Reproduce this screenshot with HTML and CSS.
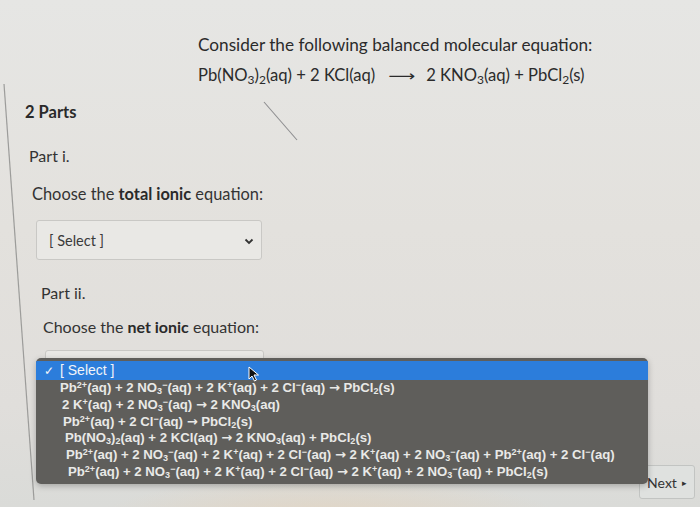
FILE: index.html
```html
<!DOCTYPE html>
<html>
<head>
<meta charset="utf-8">
<link rel="stylesheet" href="styles.css">
</head>
<body>
<div class="page">
  <svg class="marks" width="700" height="507" viewBox="0 0 700 507">
    <line x1="4" y1="84" x2="34" y2="500" stroke="#9c9c9a" stroke-width="1.2"/>
    <line x1="264" y1="102" x2="297" y2="140" stroke="#8e8e90" stroke-width="1.1"/>
  </svg>
  <header class="intro">
    <p class="lead">Consider the following balanced molecular equation:</p>
    <p class="equation">Pb(NO<sub>3</sub>)<sub>2</sub>(aq) + 2 KCl(aq) <span class="arrow">⟶</span> 2 KNO<sub>3</sub>(aq) + PbCl<sub>2</sub>(s)</p>
  </header>
  <section class="parts">
    <h2 class="parts-title">2 Parts</h2>
    <p class="part-label p1">Part i.</p>
    <p class="prompt q1">Choose the <b>total ionic</b> equation:</p>
    <div class="select s1">
      <span>[ Select ]</span>
      <svg class="chev" width="10" height="7" viewBox="0 0 10 7"><path d="M1.5 1.5 L5 5 L8.5 1.5" fill="none" stroke="#333" stroke-width="1.8"/></svg>
    </div>
    <p class="part-label p2">Part ii.</p>
    <p class="prompt q2">Choose the <b>net ionic</b> equation:</p>
    <div class="select s2"></div>
    <div class="footer">
      <div class="next">Next <span class="tri">▸</span></div>
    </div>
  </section>
  <ul class="menu">
    <li class="opt sel"><span class="check">✓</span>[ Select ]<svg class="cursor" width="12" height="16" viewBox="0 0 12 16"><path d="M1 1 L1 13 L4 10 L6.5 15 L8.5 14 L6 9 L10.5 9 Z" fill="#111" stroke="#fff" stroke-width="1"/></svg></li>
    <li class="opt o1">Pb<sup>2+</sup>(aq) + 2 NO<sub>3</sub><sup>−</sup>(aq) + 2 K<sup>+</sup>(aq) + 2 Cl<sup>−</sup>(aq) <span class="ar">→</span> PbCl<sub>2</sub>(s)</li>
    <li class="opt o2">2 K<sup>+</sup>(aq) + 2 NO<sub>3</sub><sup>−</sup>(aq) <span class="ar">→</span> 2 KNO<sub>3</sub>(aq)</li>
    <li class="opt o3">Pb<sup>2+</sup>(aq) + 2 Cl<sup>−</sup>(aq) <span class="ar">→</span> PbCl<sub>2</sub>(s)</li>
    <li class="opt o4">Pb(NO<sub>3</sub>)<sub>2</sub>(aq) + 2 KCl(aq) <span class="ar">→</span> 2 KNO<sub>3</sub>(aq) + PbCl<sub>2</sub>(s)</li>
    <li class="opt o5">Pb<sup>2+</sup>(aq) + 2 NO<sub>3</sub><sup>−</sup>(aq) + 2 K<sup>+</sup>(aq) + 2 Cl<sup>−</sup>(aq) <span class="ar">→</span> 2 K<sup>+</sup>(aq) + 2 NO<sub>3</sub><sup>−</sup>(aq) + Pb<sup>2+</sup>(aq) + 2 Cl<sup>−</sup>(aq)</li>
    <li class="opt o6">Pb<sup>2+</sup>(aq) + 2 NO<sub>3</sub><sup>−</sup>(aq) + 2 K<sup>+</sup>(aq) + 2 Cl<sup>−</sup>(aq) <span class="ar">→</span> 2 K<sup>+</sup>(aq) + 2 NO<sub>3</sub><sup>−</sup>(aq) + PbCl<sub>2</sub>(s)</li>
  </ul>
</div>
</body>
</html>
```
FILE: styles.css
```css
* { box-sizing: border-box; }
html, body { margin: 0; padding: 0; }
body {
  width: 700px;
  height: 507px;
  overflow: hidden;
  font-family: Lato, "Liberation Sans", sans-serif;
  color: #2d2d2d;
  background:
    radial-gradient(ellipse 240px 50px at 330px 525px, rgba(232, 208, 178, 0.6), rgba(232, 208, 178, 0) 100%),
    linear-gradient(180deg, #e6e6e4 0%, #e3e1dd 45%, #e0dedb 80%, #dadbd8 100%);
}
.page {
  position: relative;
  width: 700px;
  height: 507px;
}
.marks { position: absolute; left: 0; top: 0; pointer-events: none; }
p, h2 { margin: 0; }

.intro { padding: 34px 0 0 198px; }
.lead { font-size: 17.2px; line-height: 22px; color: #2b2b2b; }
.equation { font-size: 16.6px; line-height: 20px; margin-top: 9px; color: #2b2b2b; }
.equation sub { font-size: 12px; vertical-align: -3px; line-height: 0; }
.arrow { display: inline-block; font-family: "DejaVu Sans", sans-serif; font-size: 15px; transform: scaleX(1.25); margin: 0 9px 0 12px; }

.parts { padding-top: 14px; }
.parts-title { font-size: 16.5px; font-weight: 700; line-height: 20px; padding-left: 25px; margin-top: 2px; color: #2a2a2a; }
.part-label { font-size: 16px; line-height: 20px; color: #333; }
.p1 { padding-left: 29px; margin-top: 24px; }
.prompt { font-size: 16px; line-height: 20px; color: #333; }
.prompt b { font-weight: 700; color: #2a2a2a; }
.q1 { padding-left: 32px; margin-top: 18px; font-size: 16.4px; }

.select {
  display: flex;
  align-items: center;
  justify-content: space-between;
  height: 40px;
  border: 1px solid #c9c8c5;
  border-radius: 3px;
  background: #e9e8e5;
  font-size: 14.5px;
  color: #3a3a3a;
}
.s1 { margin: 16px 0 0 36px; width: 226px; padding: 0 7px 0 12px; }
.chev { margin-top: 2px; }
.p2 { padding-left: 41px; margin-top: 23px; }
.q2 { padding-left: 43px; margin-top: 14px; }
.s2 { margin: 13px 0 0 45px; width: 219px; }

.footer { display: flex; justify-content: flex-end; padding-right: 5px; margin-top: 75px; }
.next {
  width: 56px;
  height: 34px;
  border: 1px solid #c2c4c2;
  border-radius: 3px;
  background: #dfe1df;
  display: flex;
  align-items: center;
  justify-content: center;
  gap: 5px;
  font-size: 14px;
  color: #333;
}
.tri { font-size: 9px; }

.menu {
  position: absolute;
  left: 36px;
  top: 358px;
  width: 612px;
  height: 126px;
  margin: 0;
  padding: 3px 0 0 0;
  list-style: none;
  background: #5f5e5b;
  border-radius: 5px;
  box-shadow: 0 2px 6px rgba(0,0,0,0.25);
  font-family: "Liberation Sans", Arial, sans-serif;
  font-weight: 700;
  font-size: 13.2px;
  color: #e9e9e7;
  overflow: hidden;
}
.opt { height: 16.8px; line-height: 16.8px; white-space: nowrap; padding-left: 24px; }
.opt sup { font-size: 9px; vertical-align: 4px; line-height: 0; }
.opt sub { font-size: 9px; vertical-align: -2px; line-height: 0; }
.ar { font-family: "DejaVu Sans", sans-serif; font-weight: 700; font-size: 13px; }
.sel {
  position: relative;
  height: 19px;
  line-height: 19px;
  background: #2c7ddb;
  color: #f2f4f8;
  padding-left: 8px;
  font-weight: 400;
  font-size: 14px;
}
.check { font-size: 12px; margin-right: 6px; }
.cursor { position: absolute; left: 212px; top: 5px; }
.o1 { padding-left: 24px; }
.o2 { padding-left: 26px; }
.o3 { padding-left: 27px; }
.o4 { padding-left: 29px; }
.o5 { padding-left: 30px; }
.o6 { padding-left: 32px; }
```
